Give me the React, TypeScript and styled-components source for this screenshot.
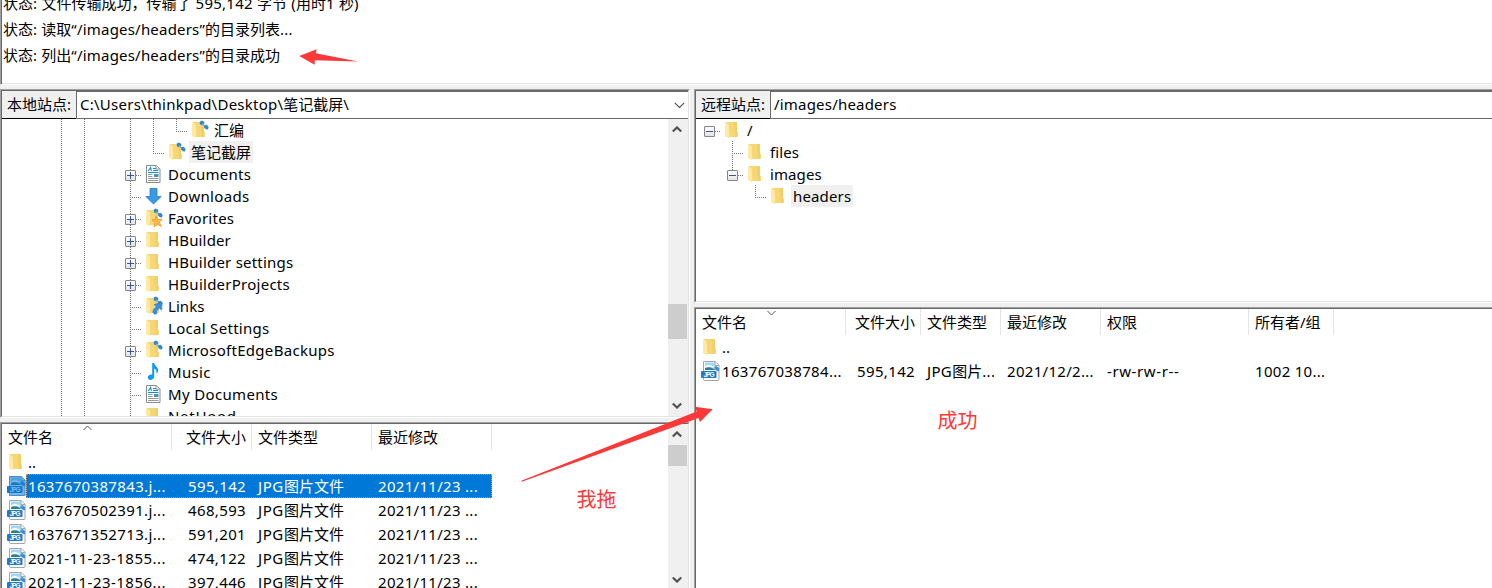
import React from 'react';
import styled, { createGlobalStyle, css } from 'styled-components';

const GlobalStyle = createGlobalStyle`
  *, *::before, *::after { box-sizing: border-box; }
  body { margin: 0; background: #f0f0f0; overflow: hidden; }
`;

const Window = styled.main`
  position: relative;
  display: flex;
  flex-direction: column;
  gap: 4px;
  width: 1492px;
  height: 588px;
  overflow: hidden;
  background: #f0f0f0;
  color: #000;
  font: 15px/22px 'Noto Sans', 'Noto Sans CJK SC', sans-serif;
  white-space: pre;
`;

const Log = styled.section`
  border-left: 1px solid #a0a0a0;
  border-bottom: 1px solid #fff;
  box-shadow: inset 1px 0 #696969, inset 0 -1px #e3e3e3;
  background: #fff;
  height: 85px;
  padding-left: 2px;
  display: flex;
  flex-direction: column;
  flex: none;
`;

const LogLine = styled.div`
  height: 26px;
  line-height: 26px;
  &:first-child { margin-top: -10px; }
`;

const Columns = styled.div`
  display: flex;
  gap: 4px;
  height: 499px;
  flex: none;
`;

const Column = styled.div<{ $width: number }>`
  display: flex;
  flex-direction: column;
  gap: 4px;
  width: ${p => p.$width}px;
  flex: none;
`;

const Pane = styled.section<{ $height: number; $edge?: boolean }>`
  display: flex;
  flex-direction: column;
  flex: none;
  height: ${p => p.$height}px;
  border: solid;
  border-width: 1px ${p => (p.$edge ? 1 : 0)}px 1px 1px;
  border-color: #a0a0a0 #fff #fff #a0a0a0;
  background: #fff;
`;

const PaneInner = styled.div<{ $edge?: boolean }>`
  display: flex;
  flex-direction: column;
  flex: 1;
  min-height: 0;
  overflow: hidden;
  border: solid;
  border-width: 1px ${p => (p.$edge ? 1 : 0)}px 1px 1px;
  border-color: #696969 #e3e3e3 #e3e3e3 #696969;
`;

const SiteBar = styled.div`
  display: flex;
  flex: none;
  height: 28px;
`;

const SiteLabel = styled.label`
  width: 74px;
  padding-left: 5px;
  line-height: 26px;
  background: #f0f0f0;
  border-bottom: 1px solid #000;
`;

const SiteValue = styled.div`
  display: flex;
  justify-content: space-between;
  align-items: center;
  flex: 1;
  padding: 0 3px;
  border: 1px solid #696969;
  border-right: 0;
`;

const SitePath = styled.span`
  height: 26px;
  line-height: 24px;
`;

const Body = styled.div`
  display: flex;
  flex: 1;
  min-height: 0;
  overflow: hidden;
`;

const Tree = styled.div<{ $indent: number }>`
  flex: 1;
  min-width: 0;
  overflow: hidden;
  padding-left: ${p => p.$indent}px;
`;

const TreeRow = styled.div`
  display: flex;
  height: 22px;
`;

const dotsV = 'repeating-linear-gradient(to bottom, #747474 0 1px, transparent 1px 2px)';
const dotsH = 'repeating-linear-gradient(to right, #747474 0 1px, transparent 1px 2px)';

type GuideKind = 'none' | 'line' | 'tee' | 'end' | 'root';

const Guide = styled.span<{ $kind: GuideKind }>`
  display: flex;
  align-items: center;
  justify-content: center;
  flex: none;
  width: 23px;
  height: 22px;
  padding-top: 2px;
  background-repeat: no-repeat;
  ${p => p.$kind === 'line' && css`
    background-image: ${dotsV};
    background-size: 1px 22px;
    background-position: 11px 0;
  `}
  ${p => p.$kind === 'tee' && css`
    background-image: ${dotsV}, ${dotsH};
    background-size: 1px 22px, 12px 1px;
    background-position: 11px 0, 11px 12px;
  `}
  ${p => p.$kind === 'end' && css`
    background-image: ${dotsV}, ${dotsH};
    background-size: 1px 12px, 12px 1px;
    background-position: 11px 0, 11px 12px;
  `}
  ${p => p.$kind === 'root' && css`
    background-image: ${dotsH};
    background-size: 12px 1px;
    background-position: 11px 12px;
  `}
`;

const Toggle = styled.span<{ $open?: boolean }>`
  width: 11px;
  height: 11px;
  border: 1px solid #858585;
  border-radius: 1px;
  background:
    linear-gradient(#3a56a0, #3a56a0) center / 7px 1px no-repeat,
    linear-gradient(#3a56a0, #3a56a0) center / ${p => (p.$open ? 0 : 1)}px 7px no-repeat,
    linear-gradient(#fff, #e4e4e4);
`;

const IconCell = styled.span`
  flex: none;
  width: 23px;
  height: 22px;
  padding-left: 3px;
  svg { display: block; }
`;

const TreeLabel = styled.span<{ $active?: boolean }>`
  margin-left: 1px;
  padding: 0 2px;
  height: 22px;
  line-height: 22px;
  background: ${p => (p.$active ? '#f0f0f0' : 'transparent')};
`;

const Scroll = styled.div`
  display: flex;
  flex-direction: column;
  align-items: center;
  flex: none;
  width: 20px;
  padding-right: 1px;
  background: #f0f0f0;
`;

const ScrollButton = styled.span`
  display: flex;
  align-items: center;
  justify-content: center;
  height: 21px;
  margin-right: 1px;
`;

const ScrollTrack = styled.div<{ $before: number }>`
  flex: 1;
  width: 19px;
  padding-top: ${p => p.$before}px;
`;

const Thumb = styled.div<{ $size: number }>`
  height: ${p => p.$size}px;
  background: #cdcdcd;
`;

const List = styled.div`
  flex: 1;
  min-width: 0;
  overflow: hidden;
`;

const HeaderRow = styled.div`
  display: flex;
  height: 26px;
`;

const HeaderCell = styled.div<{ $width: number; $right?: boolean }>`
  position: relative;
  flex: none;
  width: ${p => p.$width}px;
  padding: 1px 5px 0 6px;
  line-height: 25px;
  text-align: ${p => (p.$right ? 'right' : 'left')};
  border-right: 1px solid #e5e5e5;
`;

const SortMark = styled.svg`
  position: absolute;
  top: 1px;
  left: 50%;
  margin-left: -4px;
`;

const FileRow = styled.div`
  display: flex;
  height: 24px;
  line-height: 24px;
`;

const FileIcon = styled.span`
  flex: none;
  width: 24px;
  padding-left: 5px;
  svg { display: block; }
`;

const FileCells = styled.div<{ $selected?: boolean }>`
  display: flex;
  flex: none;
  color: ${p => (p.$selected ? '#fff' : '#000')};
  background: ${p => (p.$selected ? '#0078d7' : 'transparent')};
  outline: ${p => (p.$selected ? '1px dotted #ff8728' : '0')};
  outline-offset: -1px;
`;

const Cell = styled.span<{ $width: number; $right?: boolean; $pad?: number }>`
  flex: none;
  width: ${p => p.$width}px;
  padding: 0 ${p => (p.$right ? 6 : 0)}px 0 ${p => p.$pad ?? 6}px;
  text-align: ${p => (p.$right ? 'right' : 'left')};
`;

const Spaced = styled.span<{ $by: number }>`
  letter-spacing: ${p => p.$by}px;
`;

const Note = styled.span<{ $x: number; $y: number }>`
  position: absolute;
  left: ${p => p.$x}px;
  top: ${p => p.$y}px;
  color: #fd3838;
  font-size: 20px;
  line-height: 28px;
`;

const Arrows = styled.svg`
  position: absolute;
  inset: 0;
  pointer-events: none;
`;

type IconKind = 'folder' | 'linked' | 'doc' | 'down' | 'star' | 'links' | 'music';

const FolderShape = () => (
  <>
    <path d="M2 3h11v9.5l.6 1V18H4z" fill="#f7d775" />
    <path d="M9.5 3H13v9.5l.6 1V18H11z" fill="#f3cf68" />
    <path d="M1 3l3.6 2.2.6 8.3v6L1 17.2z" fill="#ffe9a6" />
  </>
);

const Pins = () => (
  <g fill="#3585cf">
    <path d="M8.6 2.8l2-1.3 2.6 1.2.2 2.4-2 1.2-2.4-.9z" />
    <path d="M11.5 4.2l3.4 2.6-1 1.4-3.2-2.8z" fill="#79b4e6" />
    <path d="M13.2 6.4l2.6-.6 1.8 2.2-.6 2.6-2.2-.4-1.8-1.6z" />
  </g>
);

const TreeIcon = ({ kind }: { kind: IconKind }) => (
  <svg width="20" height="22" viewBox="0 0 20 22">
    {['folder', 'linked', 'star', 'links'].includes(kind) && <FolderShape />}
    {['linked', 'star', 'links'].includes(kind) && <Pins />}
    {kind === 'star' && (
      <path d="M11.2 9l1.6 3.600 4.200-.3-2.600 3 2 4.200-3.700-2-3.700 2.600.8-4.400L7 12.800l3.300-.4z" fill="#ffb94a" stroke="#ea9420" strokeWidth=".7" />
    )}
    {kind === 'links' && (
      <path d="M9 9.500l8-2.200-.3 8-2.300-2-2.600 2.400v3.200l-2.400.4-1.700-2.100.7-2.600 3-2.900z" fill="#3691df" stroke="#2478c4" strokeWidth=".5" />
    )}
    {kind === 'doc' && (
      <>
        <path d="M1.500 2.500h9.700l3.800 3.400v13.600H1.500z" fill="#fff" stroke="#858b8f" />
        <path d="M11 2.800v3.400h3.700" fill="#e8eef0" stroke="#858b8f" strokeWidth=".8" />
        <path d="M3.300 8l2.300-3.600L6.400 8M8 5.500h3M8 7.500h5M3 9.500h10.500" fill="none" stroke="#0a8fdc" strokeWidth="1.100" />
        <path d="M3 11.500h4.500M3 13.500h4.500M3 15.500h10.500M3 17.500h10.500" stroke="#9a9a9a" />
        <path d="M9 11h4.500v3H9z" fill="#5a8fa8" />
      </>
    )}
    {kind === 'down' && (
      <path d="M5 3.500h7v8h4.200L8.500 19 .8 11.500H5z" fill="#3899e8" stroke="#2a7cc9" strokeWidth=".8" />
    )}
    {kind === 'music' && (
      <path d="M7.200 2h2c.4 3.200 4.400 4.200 3.900 7.800-.2 1.300-.9 2.300-1.800 3 .7-3-.3-4.600-2.100-5.400v8.200c0 1.900-1.500 3.300-3.500 3.300-1.800 0-2.900-1-2.900-2.400 0-1.800 1.900-3.300 4.400-2.900z" fill="#0c9bf4" />
    )}
  </svg>
);

const JpgIcon = ({ selected }: { selected?: boolean }) => (
  <svg width="20" height="24" viewBox="0 0 20 24">
    <path d="M2.500 2.500h11.500l4 3.500v14.500q0 1-1 1h-13.500q-1 0-1-1z" fill="#fff" stroke="#a5a5a5" />
    <path d="M4 3.500h9.500v3l1.500 1.500v2.500h-11z" fill="#9ed8f8" />
    <path d="M4 7.500q2.500-2.500 5-1.500l4 1.500v1H4z" fill="#f3fbff" />
    <path d="M4 9.200q3-1.700 6-.7l4.500 2.500H4z" fill="#2f7e8c" />
    <path d="M14 2.500v4h4" fill="#f4f4f4" stroke="#a5a5a5" />
    <path d="M13.500 8l2-1 2.700 2.200v3l-2.200-.2-2.500-2z" fill="#3d8fd6" />
    <rect x="0" y="12" width="15.500" height="7" rx="1" fill="#2478c8" />
    <text x="2.500" y="17.900" fontSize="6.500" fontWeight="700" fontFamily="Liberation Sans, sans-serif" fill="#fff" textLength="11">JPG</text>
    {selected && <path d="M2 2h12.500l4 4v16H2v-3H0v-7h2z" fill="#0078d7" opacity=".55" />}
  </svg>
);

const FolderFileIcon = () => (
  <svg width="20" height="24" viewBox="-1 -1 20 24"><FolderShape /></svg>
);

const Chevron = ({ up }: { up?: boolean }) => (
  <svg width="10" height="7" viewBox="0 0 10 7">
    <path d={up ? 'M.8 5.600L5 1.400l4.200 4.200' : 'M.8 1.400L5 5.600l4.200-4.200'} fill="none" stroke="#505050" strokeWidth="2.100" />
  </svg>
);

/* Latin runs are tracked slightly; ideographs keep their own full-width pitch. */
const Mixed = ({ children, by = 0.25 }: { children: string; by?: number }) => (
  <span>
    {children.split(/([\u2e80-\uffef]+)/).filter(Boolean).map((run, i) =>
      /[\u2e80-\uffef]/.test(run) ? run : <Spaced key={i} $by={by}>{run}</Spaced>
    )}
  </span>
);

interface NodeSpec {
  guides: GuideKind[];
  icon: IconKind;
  text: string;
  toggle?: 'plus' | 'minus';
  active?: boolean;
  by?: number;
}

const user = (text: string, icon: IconKind, plus = false, by = 0.25): NodeSpec => ({
  guides: ['line', 'line', 'none', 'tee'],
  icon,
  text,
  toggle: plus ? 'plus' : undefined,
  by,
});

const localNodes: NodeSpec[] = [
  { guides: ['line', 'line', 'none', 'line', 'line', 'end'], icon: 'linked', text: '汇编' },
  { guides: ['line', 'line', 'none', 'line', 'end'], icon: 'linked', text: '笔记截屏', active: true },
  user('Documents', 'doc', true),
  user('Downloads', 'down', false, 0.33),
  user('Favorites', 'star', true),
  user('HBuilder', 'folder', true, 0.15),
  user('HBuilder settings', 'folder', true, 0.22),
  user('HBuilderProjects', 'folder', true),
  user('Links', 'links', false, 0.05),
  user('Local Settings', 'folder', false, 0.3),
  user('MicrosoftEdgeBackups', 'linked', true, 0.3),
  user('Music', 'music', false, 0.3),
  user('My Documents', 'doc', false, 0.34),
  user('NetHood', 'folder', false, 0.7),
];

const remoteNodes: NodeSpec[] = [
  { guides: ['root'], icon: 'folder', text: '/', toggle: 'minus', by: 0 },
  { guides: ['none', 'tee'], icon: 'folder', text: 'files', by: 0.1 },
  { guides: ['none', 'end'], icon: 'folder', text: 'images', toggle: 'minus', by: 0.1 },
  { guides: ['none', 'none', 'end'], icon: 'folder', text: 'headers', active: true, by: 0.15 },
];

const TreeNodes = ({ nodes }: { nodes: NodeSpec[] }) => (
  <>
    {nodes.map(n => (
      <TreeRow key={n.text}>
        {n.guides.map((g, i) => (
          <Guide key={i} $kind={g}>
            {n.toggle && i === n.guides.length - 1 && <Toggle $open={n.toggle === 'minus'} />}
          </Guide>
        ))}
        <IconCell><TreeIcon kind={n.icon} /></IconCell>
        <TreeLabel $active={n.active}><Mixed by={n.by}>{n.text}</Mixed></TreeLabel>
      </TreeRow>
    ))}
  </>
);

const localFiles: [string, string, number][] = [
  ['1637670387843.j...', '595,142', 0.35],
  ['1637670502391.j...', '468,593', 0.35],
  ['1637671352713.j...', '591,201', 0.35],
  ['2021-11-23-1855...', '474,122', 0.47],
  ['2021-11-23-1856...', '397,446', 0.47],
];

export default function App() {
  return (
    <>
      <GlobalStyle />
      <Window>
        <Log>
          <LogLine><Mixed>状态: 文件传输成功，传输了 595,142 字节 (用时1 秒)</Mixed></LogLine>
          <LogLine><Mixed by={0.2}>状态: 读取“/images/headers”的目录列表...</Mixed></LogLine>
          <LogLine><Mixed by={0.2}>状态: 列出“/images/headers”的目录成功</Mixed></LogLine>
        </Log>
        <Columns>
          <Column $width={690}>
            <Pane $height={329} $edge>
              <PaneInner $edge>
                <SiteBar>
                  <SiteLabel>本地站点:</SiteLabel>
                  <SiteValue>
                    <SitePath><Mixed>C:\Users\thinkpad\Desktop\笔记截屏\</Mixed></SitePath>
                    <svg width="11" height="7" viewBox="0 0 11 7">
                      <path d="M.8.8l4.700 4.700L10.200.8" fill="none" stroke="#505050" strokeWidth="1.100" />
                    </svg>
                  </SiteValue>
                </SiteBar>
                <Body>
                  <Tree $indent={48}><TreeNodes nodes={localNodes} /></Tree>
                  <Scroll>
                    <ScrollButton><Chevron up /></ScrollButton>
                    <ScrollTrack $before={164}><Thumb $size={35} /></ScrollTrack>
                    <ScrollButton><Chevron /></ScrollButton>
                  </Scroll>
                </Body>
              </PaneInner>
            </Pane>
            <Pane $height={170} $edge>
              <PaneInner $edge>
                <Body>
                  <List>
                    <HeaderRow>
                      <HeaderCell $width={170}>
                        文件名
                        <SortMark width="9" height="6" viewBox="0 0 9 6"><path d="M.5 5l4-4 4 4" fill="none" stroke="#555" /></SortMark>
                      </HeaderCell>
                      <HeaderCell $width={80} $right>文件大小</HeaderCell>
                      <HeaderCell $width={120}>文件类型</HeaderCell>
                      <HeaderCell $width={120}>最近修改</HeaderCell>
                    </HeaderRow>
                    <FileRow>
                      <FileIcon><FolderFileIcon /></FileIcon>
                      <FileCells><Cell $width={146} $pad={2}>..</Cell></FileCells>
                    </FileRow>
                    {localFiles.map(([name, size, by], i) => (
                      <FileRow key={name}>
                        <FileIcon><JpgIcon selected={i === 0} /></FileIcon>
                        <FileCells $selected={i === 0}>
                          <Cell $width={146} $pad={2}><Mixed by={by}>{name}</Mixed></Cell>
                          <Cell $width={80} $right><Mixed by={0.35}>{size}</Mixed></Cell>
                          <Cell $width={120}><Mixed by={0.6}>JPG图片文件</Mixed></Cell>
                          <Cell $width={120}><Mixed by={0.3}>2021/11/23 ...</Mixed></Cell>
                        </FileCells>
                      </FileRow>
                    ))}
                  </List>
                  <Scroll>
                    <ScrollButton><Chevron up /></ScrollButton>
                    <ScrollTrack $before={0}><Thumb $size={21} /></ScrollTrack>
                    <ScrollButton><Chevron /></ScrollButton>
                  </Scroll>
                </Body>
              </PaneInner>
            </Pane>
          </Column>
          <Column $width={798}>
            <Pane $height={214}>
              <PaneInner>
                <SiteBar>
                  <SiteLabel>远程站点:</SiteLabel>
                  <SiteValue><SitePath><Mixed by={0.2}>/images/headers</Mixed></SitePath></SiteValue>
                </SiteBar>
                <Body>
                  <Tree $indent={2}><TreeNodes nodes={remoteNodes} /></Tree>
                </Body>
              </PaneInner>
            </Pane>
            <Pane $height={285}>
              <PaneInner>
                <HeaderRow>
                  <HeaderCell $width={150}>
                    文件名
                    <SortMark width="9" height="6" viewBox="0 0 9 6"><path d="M.5 1l4 4 4-4" fill="none" stroke="#555" /></SortMark>
                  </HeaderCell>
                  <HeaderCell $width={75} $right>文件大小</HeaderCell>
                  <HeaderCell $width={80}>文件类型</HeaderCell>
                  <HeaderCell $width={100}>最近修改</HeaderCell>
                  <HeaderCell $width={148}>权限</HeaderCell>
                  <HeaderCell $width={85}>所有者/组</HeaderCell>
                </HeaderRow>
                <FileRow>
                  <FileIcon><FolderFileIcon /></FileIcon>
                  <FileCells><Cell $width={126} $pad={2}>..</Cell></FileCells>
                </FileRow>
                <FileRow>
                  <FileIcon><JpgIcon /></FileIcon>
                  <FileCells>
                    <Cell $width={126} $pad={2}><Mixed by={0.33}>163767038784...</Mixed></Cell>
                    <Cell $width={75} $right><Mixed by={0.35}>595,142</Mixed></Cell>
                    <Cell $width={80}><Mixed by={0.35}>JPG图片...</Mixed></Cell>
                    <Cell $width={100}><Mixed by={0.3}>2021/12/2...</Mixed></Cell>
                    <Cell $width={148}><Mixed by={0.6}>-rw-rw-r--</Mixed></Cell>
                    <Cell $width={85}><Mixed by={0.3}>1002 10...</Mixed></Cell>
                  </FileCells>
                </FileRow>
              </PaneInner>
            </Pane>
          </Column>
        </Columns>
        <Note $x={576.5} $y={486}>我拖</Note>
        <Note $x={937.5} $y={407}>成功</Note>
        <Arrows width="1492" height="588" viewBox="0 0 1492 588" fill="#fd3838">
          <path d="M299.300 56l17.400-6.700-1 4L358 61.500l-43.300-1.200v4.400z" />
          <path d="M712.700 409.300l-18-2.600 2 4.800L521.300 480.700l.5 1.100L698.500 418l1.500 4z" />
        </Arrows>
      </Window>
    </>
  );
}
